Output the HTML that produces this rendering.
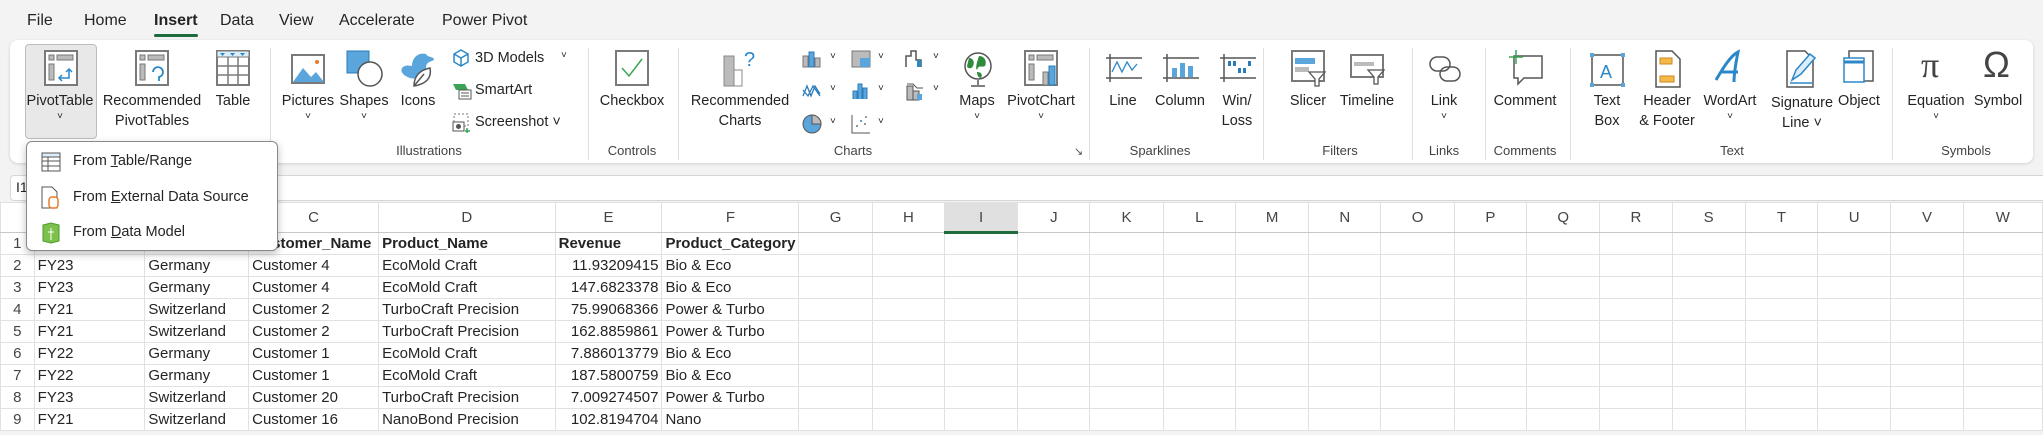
<!DOCTYPE html>
<html><head><meta charset="utf-8"><style>
*{margin:0;padding:0;box-sizing:border-box}
body{width:2043px;height:435px;overflow:hidden;background:#f3f3f3;font-family:"Liberation Sans",sans-serif;color:#242424;position:relative}
.a{position:absolute;white-space:nowrap}
.tab{position:absolute;top:12px;font-size:16px}
.rib{position:absolute;left:10px;top:40px;width:2023px;height:123px;background:#fff;border-radius:8px;box-shadow:0 1px 3px rgba(0,0,0,.15)}
.lb{position:absolute;font-size:14.5px;text-align:center;line-height:20px;transform:translateX(-50%);white-space:nowrap}
.gl{position:absolute;top:143px;font-size:13px;color:#424242;transform:translateX(-50%);white-space:nowrap}
.sep{position:absolute;top:48px;width:1px;height:112px;background:#e0e0e0}
.chev{font-size:10px;display:block;line-height:12px}
svg{position:absolute;overflow:visible}
table{position:absolute;left:0;top:202px;border-collapse:collapse;table-layout:fixed;font-size:15px;background:#fff}
td{border:1px solid #e1e1e1;height:22px;padding:0 3px;white-space:nowrap;overflow:hidden}
tr.h td{height:30px;text-align:center;color:#444;background:#fff;font-size:15px;border-bottom:1px solid #c8c8c8}
td.n{text-align:center;color:#444;background:#fff;padding:0}
td.r{text-align:right}
tr.b td{font-weight:bold}
.menu{position:absolute;left:26px;top:141px;width:252px;height:110px;background:#fff;border:1px solid #8a8a8a;border-radius:6px;box-shadow:0 3px 8px rgba(0,0,0,.25)}
.mi{position:absolute;left:46px;font-size:14.5px}
</style></head><body>
<div class="tab" style="left:27px">File</div>
<div class="tab" style="left:84px">Home</div>
<div class="tab" style="left:154px;font-weight:bold">Insert</div>
<div class="a" style="left:154px;top:34px;width:44px;height:3px;background:#1e6b3d;border-radius:2px"></div>
<div class="tab" style="left:220px">Data</div>
<div class="tab" style="left:279px">View</div>
<div class="tab" style="left:339px">Accelerate</div>
<div class="tab" style="left:442px">Power Pivot</div>

<div class="rib"></div>
<div class="a" style="left:25px;top:44px;width:72px;height:95px;background:#e8e8e8;border:1px solid #bdbdbd;border-radius:4px"></div>

<!-- PivotTable icon -->
<svg style="left:44px;top:50px" width="34" height="36"><rect x="1" y="1" width="32" height="34" fill="#fff" stroke="#7a7a7a" stroke-width="2"/><rect x="5" y="5" width="5" height="5" fill="#bbb" stroke="#777"/><rect x="13" y="5" width="16" height="5" fill="#bbb" stroke="#777"/><rect x="5" y="14" width="5" height="16" fill="#bbb" stroke="#777"/><path d="M15 28h10v-9M22 22l3-3 3 3M18 25l-3 3 3 3" fill="none" stroke="#2b88c8" stroke-width="1.5"/></svg>
<div class="lb" style="left:60px;top:91px">PivotTable<span class="chev">˅</span></div>
<svg style="left:135px;top:50px" width="34" height="36"><rect x="1" y="1" width="32" height="34" fill="#fff" stroke="#7a7a7a" stroke-width="2"/><rect x="5" y="5" width="5" height="5" fill="#bbb" stroke="#777"/><rect x="13" y="5" width="16" height="5" fill="#bbb" stroke="#777"/><rect x="5" y="14" width="5" height="16" fill="#bbb" stroke="#777"/><path d="M18 22a5 5 0 1 1 6 5v4M24 34v1" fill="none" stroke="#2b88c8" stroke-width="1.8"/></svg>
<div class="lb" style="left:152px;top:91px">Recommended<br>PivotTables</div>
<svg style="left:216px;top:50px" width="34" height="36"><rect x="1" y="1" width="32" height="34" fill="#fff" stroke="#7a7a7a" stroke-width="2"/><rect x="1" y="1" width="32" height="6" fill="#dbeefa" stroke="#7a7a7a"/><path d="M1 16h32M1 25h32M12 7v28M22 7v28" stroke="#7a7a7a" stroke-width="1.5"/><path d="M4 3h5l-2.5 3zM14 3h5l-2.5 3zM24 3h5l-2.5 3z" fill="#2b88c8"/></svg>
<div class="lb" style="left:233px;top:91px">Table</div>
<div class="sep" style="left:270px"></div>

<svg style="left:291px;top:54px" width="34" height="30"><rect x="1" y="1" width="32" height="28" fill="#fff" stroke="#7a7a7a" stroke-width="2"/><path d="M2 28l10-14 8 9 5-5 8 10z" fill="#5aa5dc"/><circle cx="26" cy="8" r="2" fill="#e87a2c"/></svg>
<div class="lb" style="left:308px;top:91px">Pictures<span class="chev">˅</span></div>
<svg style="left:346px;top:50px" width="38" height="38"><rect x="1" y="1" width="22" height="22" fill="#5aa5dc" stroke="#2b7cba"/><circle cx="24" cy="24" r="12" fill="#fff" stroke="#555" stroke-width="1.5"/></svg>
<div class="lb" style="left:364px;top:91px">Shapes<span class="chev">˅</span></div>
<svg style="left:400px;top:50px" width="38" height="38"><path d="M2 18c4-4 8-2 10-2 0-8 6-14 14-12 2 4 8 2 8 6-4 2-8 2-8 8 0 8-10 12-16 10C4 26 0 22 2 18z" fill="#5aa5dc"/><path d="M14 36c0-10 6-16 16-18 2 10-4 16-16 18zM14 36l10-12" fill="#fff" stroke="#555" stroke-width="1.5"/></svg>
<div class="lb" style="left:418px;top:91px">Icons</div>
<svg style="left:452px;top:49px" width="18" height="18"><path d="M9 1l7 4v8l-7 4-7-4V5zM2 5l7 4 7-4M9 9v8" fill="none" stroke="#2b88c8" stroke-width="1.5"/></svg>
<div class="a" style="left:475px;top:50px;font-size:14.5px">3D Models</div><div class="a" style="left:561px;top:50px;font-size:10px">˅</div>
<svg style="left:452px;top:82px" width="20" height="18"><path d="M1 2h12l3 6H4z" fill="#3aa356"/><rect x="7" y="8" width="12" height="9" fill="#fff" stroke="#555"/><path d="M9 11h8M9 14h8" stroke="#555"/></svg>
<div class="a" style="left:475px;top:82px;font-size:14.5px">SmartArt</div>
<svg style="left:452px;top:113px" width="20" height="20"><rect x="2" y="1" width="14" height="12" fill="none" stroke="#777" stroke-dasharray="2 2"/><rect x="1" y="9" width="11" height="9" fill="#fff" stroke="#555"/><circle cx="6.5" cy="13.5" r="2.5" fill="#555"/><path d="M15 15v5M13 18h5" stroke="#3aa356" stroke-width="1.5"/></svg>
<div class="a" style="left:475px;top:114px;font-size:14.5px">Screenshot ˅</div>
<div class="gl" style="left:429px">Illustrations</div>
<div class="sep" style="left:588px"></div>

<svg style="left:615px;top:50px" width="34" height="36"><rect x="1" y="1" width="32" height="34" fill="#fff" stroke="#7a7a7a" stroke-width="2"/><path d="M7 18l7 8 13-17" fill="none" stroke="#3aa356" stroke-width="1.5"/></svg>
<div class="lb" style="left:632px;top:91px">Checkbox</div>
<div class="gl" style="left:632px">Controls</div>
<div class="sep" style="left:678px"></div>

<svg style="left:723px;top:50px" width="36" height="38"><rect x="1" y="6" width="10" height="30" fill="#bbb" stroke="#888"/><rect x="11" y="20" width="8" height="16" fill="#fff" stroke="#888"/><text x="21" y="16" font-size="20" fill="#2b88c8" font-family="Liberation Sans">?</text></svg>
<div class="lb" style="left:740px;top:91px">Recommended<br>Charts</div>
<!-- small chart icons -->
<svg style="left:802px;top:50px" width="20" height="18"><rect x="1" y="6" width="5" height="11" fill="#bbb" stroke="#777"/><rect x="7" y="2" width="5" height="15" fill="#5aa5dc" stroke="#2b7cba"/><rect x="13" y="8" width="5" height="9" fill="#bbb" stroke="#777"/></svg><div class="a" style="left:830px;top:51px;font-size:10px">˅</div>
<svg style="left:802px;top:82px" width="20" height="18"><path d="M1 14l4-10 4 10 4-10 5 8M1 8l5 6 5-10 7 10" fill="none" stroke="#2b7cba" stroke-width="1.3"/></svg><div class="a" style="left:830px;top:83px;font-size:10px">˅</div>
<svg style="left:802px;top:114px" width="20" height="20"><circle cx="10" cy="10" r="9" fill="#5aa5dc" stroke="#555"/><path d="M10 10V1A9 9 0 0 1 19 10z" fill="#bbb" stroke="#555"/></svg><div class="a" style="left:830px;top:116px;font-size:10px">˅</div>
<svg style="left:851px;top:50px" width="20" height="18"><rect x="1" y="1" width="18" height="16" fill="#bbb" stroke="#777"/><rect x="9" y="8" width="10" height="9" fill="#5aa5dc"/></svg><div class="a" style="left:878px;top:51px;font-size:10px">˅</div>
<svg style="left:851px;top:82px" width="20" height="18"><path d="M2 17V9h4v8M7 17V2h4v15M12 17V6h4v11" fill="#5aa5dc" stroke="#2b7cba"/></svg><div class="a" style="left:878px;top:83px;font-size:10px">˅</div>
<svg style="left:851px;top:114px" width="20" height="20"><path d="M1 1v18h18" fill="none" stroke="#555"/><circle cx="6" cy="12" r="1" fill="#777"/><circle cx="10" cy="7" r="1" fill="#2b88c8"/><circle cx="14" cy="10" r="1" fill="#777"/><circle cx="15" cy="3" r="1" fill="#777"/></svg><div class="a" style="left:878px;top:116px;font-size:10px">˅</div>
<svg style="left:905px;top:50px" width="20" height="18"><path d="M1 17V6h5V1h5v9h5v7" fill="none" stroke="#555" stroke-width="1.5"/><rect x="12" y="10" width="4" height="7" fill="#2b88c8"/></svg><div class="a" style="left:933px;top:51px;font-size:10px">˅</div>
<svg style="left:905px;top:82px" width="20" height="20"><rect x="2" y="4" width="6" height="14" fill="#bbb" stroke="#555"/><rect x="8" y="9" width="6" height="9" fill="#bbb" stroke="#555"/><rect x="12" y="12" width="5" height="6" fill="#5aa5dc"/><path d="M2 2h6l4 4h6" fill="none" stroke="#555"/></svg><div class="a" style="left:933px;top:83px;font-size:10px">˅</div>
<svg style="left:961px;top:50px" width="34" height="38"><circle cx="17" cy="16" r="13" fill="#fff" stroke="#555" stroke-width="1.5"/><path d="M8 8c4 0 6 4 4 8s-6 2-6 0zM18 6c6 0 8 6 6 10-4 2-6-2-8 4-2-2 0-8 2-14zM16 22c4 0 6 2 4 6-2 0-4-2-4-6z" fill="#2f8a3d"/><path d="M17 30v5M10 36h14" stroke="#555" stroke-width="1.5"/></svg>
<div class="lb" style="left:977px;top:91px">Maps<span class="chev">˅</span></div>
<svg style="left:1024px;top:50px" width="36" height="38"><rect x="1" y="1" width="32" height="34" fill="#fff" stroke="#7a7a7a" stroke-width="2"/><rect x="5" y="5" width="5" height="5" fill="#bbb" stroke="#777"/><rect x="13" y="5" width="16" height="5" fill="#bbb" stroke="#777"/><rect x="5" y="14" width="5" height="16" fill="#bbb" stroke="#777"/><rect x="19" y="22" width="5" height="13" fill="#bbb" stroke="#777"/><rect x="25" y="16" width="6" height="19" fill="#5aa5dc" stroke="#2b7cba"/></svg>
<div class="lb" style="left:1041px;top:91px">PivotChart<span class="chev">˅</span></div>
<div class="gl" style="left:853px">Charts</div>
<div class="a" style="left:1074px;top:145px;font-size:11px;color:#555">↘</div>
<div class="sep" style="left:1089px"></div>

<svg style="left:1106px;top:54px" width="36" height="28"><path d="M0 4h36M0 24h36M4 0v28" stroke="#555" stroke-width="1.5"/><path d="M6 18l5-10 5 10 5-10 5 8 5-6" fill="none" stroke="#2b88c8" stroke-width="1.3"/></svg>
<div class="lb" style="left:1123px;top:91px">Line</div>
<svg style="left:1163px;top:54px" width="36" height="28"><path d="M0 4h36M0 24h36M4 0v28" stroke="#555" stroke-width="1.5"/><rect x="9" y="14" width="5" height="9" fill="#5aa5dc"/><rect x="17" y="9" width="5" height="14" fill="#5aa5dc"/><rect x="25" y="12" width="5" height="11" fill="#5aa5dc"/></svg>
<div class="lb" style="left:1180px;top:91px">Column</div>
<svg style="left:1220px;top:54px" width="36" height="28"><path d="M0 4h36M4 0v28M0 24h36" stroke="#555" stroke-width="1.5"/><rect x="8" y="7" width="3" height="5" fill="#2b7cba"/><rect x="13" y="7" width="3" height="5" fill="#2b7cba"/><rect x="18" y="14" width="3" height="5" fill="#2b7cba"/><rect x="23" y="14" width="3" height="5" fill="#2b7cba"/><rect x="28" y="7" width="3" height="5" fill="#2b7cba"/></svg>
<div class="lb" style="left:1237px;top:91px">Win/<br>Loss</div>
<div class="gl" style="left:1160px">Sparklines</div>
<div class="sep" style="left:1263px"></div>

<svg style="left:1291px;top:50px" width="36" height="38"><rect x="1" y="1" width="32" height="30" fill="#fff" stroke="#7a7a7a" stroke-width="2"/><rect x="4" y="8" width="20" height="6" fill="#5aa5dc"/><rect x="4" y="17" width="14" height="5" fill="#bbb"/><path d="M18 22h16l-6 7v7h-4v-7z" fill="#fff" stroke="#555" stroke-width="1.3"/></svg>
<div class="lb" style="left:1308px;top:91px">Slicer</div>
<svg style="left:1350px;top:54px" width="36" height="34"><rect x="1" y="1" width="32" height="22" fill="#fff" stroke="#7a7a7a" stroke-width="2"/><path d="M4 10h20" stroke="#bbb" stroke-width="4"/><path d="M18 16h16l-6 7v7h-4v-7z" fill="#fff" stroke="#555" stroke-width="1.3"/></svg>
<div class="lb" style="left:1367px;top:91px">Timeline</div>
<div class="gl" style="left:1340px">Filters</div>
<div class="sep" style="left:1412px"></div>

<svg style="left:1428px;top:54px" width="34" height="30"><rect x="2" y="3" width="20" height="14" rx="7" fill="none" stroke="#555" stroke-width="1.5"/><rect x="12" y="13" width="20" height="14" rx="7" fill="none" stroke="#555" stroke-width="1.5"/></svg>
<div class="lb" style="left:1444px;top:91px">Link<span class="chev">˅</span></div>
<div class="gl" style="left:1444px">Links</div>
<div class="sep" style="left:1485px"></div>

<svg style="left:1508px;top:50px" width="36" height="38"><path d="M6 6h28v22H16l-6 6v-6H6z" fill="#fff" stroke="#555" stroke-width="1.5"/><path d="M8 0v14M1 7h14" stroke="#3aa356" stroke-width="1.5"/></svg>
<div class="lb" style="left:1525px;top:91px">Comment</div>
<div class="gl" style="left:1525px">Comments</div>
<div class="sep" style="left:1570px"></div>

<svg style="left:1590px;top:53px" width="36" height="36"><rect x="2" y="2" width="31" height="30" fill="#fff" stroke="#555" stroke-width="1.5"/><g fill="#5aa5dc"><rect x="0" y="0" width="4" height="4"/><rect x="31" y="0" width="4" height="4"/><rect x="0" y="30" width="4" height="4"/><rect x="31" y="30" width="4" height="4"/></g><text x="10" y="25" font-size="18" fill="#2b88c8" font-family="Liberation Sans">A</text></svg>
<div class="lb" style="left:1607px;top:91px">Text<br>Box</div>
<svg style="left:1655px;top:50px" width="26" height="38"><path d="M1 1h16l8 8v28H1z" fill="#fff" stroke="#555" stroke-width="1.5"/><rect x="5" y="8" width="12" height="6" fill="#f5b94a" stroke="#c98a1c"/><rect x="5" y="26" width="14" height="6" fill="#f5b94a" stroke="#c98a1c"/></svg>
<div class="lb" style="left:1667px;top:91px">Header<br>&amp; Footer</div>
<svg style="left:1714px;top:50px" width="32" height="38"><path d="M2 30c6-10 14-24 22-28-2 10-4 20-4 30M8 22h16" fill="none" stroke="#2b88c8" stroke-width="3"/></svg>
<div class="lb" style="left:1730px;top:91px">WordArt<span class="chev">˅</span></div>
<svg style="left:1786px;top:50px" width="34" height="38"><path d="M1 1h18l8 8v28H1z" fill="#fff" stroke="#555" stroke-width="1.5"/><path d="M6 30l4-10L24 4l5 4-14 16z" fill="#dbeefa" stroke="#2b88c8" stroke-width="1.5"/><path d="M4 33h22" stroke="#2b88c8" stroke-width="1.5"/></svg>
<div class="lb" style="left:1802px;top:93px">Signature<br>Line ˅</div>
<svg style="left:1843px;top:50px" width="32" height="38"><rect x="6" y="1" width="24" height="30" fill="#fff" stroke="#555" stroke-width="1.5"/><rect x="1" y="8" width="20" height="24" fill="#fff" stroke="#2b88c8" stroke-width="1.5"/><path d="M1 12h20" stroke="#2b88c8" stroke-width="3"/></svg>
<div class="lb" style="left:1859px;top:91px">Object</div>
<div class="gl" style="left:1732px">Text</div>
<div class="sep" style="left:1892px"></div>

<div class="a" style="left:1921px;top:44px;font-size:36px;font-family:'Liberation Serif',serif;color:#444">π</div>
<div class="lb" style="left:1936px;top:91px">Equation<span class="chev">˅</span></div>
<div class="a" style="left:1983px;top:44px;font-size:36px;color:#444">Ω</div>
<div class="lb" style="left:1998px;top:91px">Symbol</div>
<div class="gl" style="left:1966px">Symbols</div>

<!-- formula bar -->
<div class="a" style="left:10px;top:175px;width:2040px;height:26px;background:#fff;border:1px solid #d6d6d6;border-radius:4px"></div>
<div class="a" style="left:16px;top:179px;font-size:14px">I1</div>

<table>
<colgroup><col style="width:34px"><col style="width:111px"><col style="width:104px"><col style="width:130px"><col style="width:177px"><col style="width:107px"><col style="width:136px"><col style="width:74px"><col style="width:73px"><col style="width:74px"><col style="width:73px"><col style="width:74px"><col style="width:73px"><col style="width:74px"><col style="width:73px"><col style="width:74px"><col style="width:73px"><col style="width:74px"><col style="width:73px"><col style="width:74px"><col style="width:73px"><col style="width:74px"><col style="width:73px"><col style="width:80px"></colgroup>
<tr class="h"><td></td><td>A</td><td>B</td><td>C</td><td>D</td><td>E</td><td>F</td><td>G</td><td>H</td><td style="background:#e0e0e0;border-bottom:3px solid #1e6b3d">I</td><td>J</td><td>K</td><td>L</td><td>M</td><td>N</td><td>O</td><td>P</td><td>Q</td><td>R</td><td>S</td><td>T</td><td>U</td><td>V</td><td>W</td></tr>
<tr class="b"><td class="n" style="font-weight:normal">1</td><td>Fiscal_Year</td><td>Country</td><td>Customer_Name</td><td>Product_Name</td><td>Revenue</td><td>Product_Category</td><td></td><td></td><td></td><td></td><td></td><td></td><td></td><td></td><td></td><td></td><td></td><td></td><td></td><td></td><td></td><td></td><td></td></tr>
<tr><td class="n">2</td><td>FY23</td><td>Germany</td><td>Customer 4</td><td>EcoMold Craft</td><td class="r">11.93209415</td><td>Bio &amp; Eco</td><td></td><td></td><td></td><td></td><td></td><td></td><td></td><td></td><td></td><td></td><td></td><td></td><td></td><td></td><td></td><td></td><td></td></tr>
<tr><td class="n">3</td><td>FY23</td><td>Germany</td><td>Customer 4</td><td>EcoMold Craft</td><td class="r">147.6823378</td><td>Bio &amp; Eco</td><td></td><td></td><td></td><td></td><td></td><td></td><td></td><td></td><td></td><td></td><td></td><td></td><td></td><td></td><td></td><td></td><td></td></tr>
<tr><td class="n">4</td><td>FY21</td><td>Switzerland</td><td>Customer 2</td><td>TurboCraft Precision</td><td class="r">75.99068366</td><td>Power &amp; Turbo</td><td></td><td></td><td></td><td></td><td></td><td></td><td></td><td></td><td></td><td></td><td></td><td></td><td></td><td></td><td></td><td></td><td></td></tr>
<tr><td class="n">5</td><td>FY21</td><td>Switzerland</td><td>Customer 2</td><td>TurboCraft Precision</td><td class="r">162.8859861</td><td>Power &amp; Turbo</td><td></td><td></td><td></td><td></td><td></td><td></td><td></td><td></td><td></td><td></td><td></td><td></td><td></td><td></td><td></td><td></td><td></td></tr>
<tr><td class="n">6</td><td>FY22</td><td>Germany</td><td>Customer 1</td><td>EcoMold Craft</td><td class="r">7.886013779</td><td>Bio &amp; Eco</td><td></td><td></td><td></td><td></td><td></td><td></td><td></td><td></td><td></td><td></td><td></td><td></td><td></td><td></td><td></td><td></td><td></td></tr>
<tr><td class="n">7</td><td>FY22</td><td>Germany</td><td>Customer 1</td><td>EcoMold Craft</td><td class="r">187.5800759</td><td>Bio &amp; Eco</td><td></td><td></td><td></td><td></td><td></td><td></td><td></td><td></td><td></td><td></td><td></td><td></td><td></td><td></td><td></td><td></td><td></td></tr>
<tr><td class="n">8</td><td>FY23</td><td>Switzerland</td><td>Customer 20</td><td>TurboCraft Precision</td><td class="r">7.009274507</td><td>Power &amp; Turbo</td><td></td><td></td><td></td><td></td><td></td><td></td><td></td><td></td><td></td><td></td><td></td><td></td><td></td><td></td><td></td><td></td><td></td></tr>
<tr><td class="n">9</td><td>FY21</td><td>Switzerland</td><td>Customer 16</td><td>NanoBond Precision</td><td class="r">102.8194704</td><td>Nano</td><td></td><td></td><td></td><td></td><td></td><td></td><td></td><td></td><td></td><td></td><td></td><td></td><td></td><td></td><td></td><td></td><td></td></tr>
</table>

<div class="menu">
<svg style="left:14px;top:10px" width="20" height="20"><rect x="1" y="1" width="18" height="18" fill="#fff" stroke="#555"/><rect x="1" y="1" width="18" height="4" fill="#dbeefa" stroke="#555"/><path d="M1 9h18M1 14h18M7 5v14" stroke="#555"/></svg>
<div class="mi" style="top:11px">From <u>T</u>able/Range</div>
<svg style="left:14px;top:44px" width="20" height="24"><path d="M1 1h10l5 5v16H1z" fill="#fff" stroke="#555"/><rect x="8" y="11" width="9" height="11" rx="3" fill="#fff" stroke="#e87a2c" stroke-width="1.5"/></svg>
<div class="mi" style="top:47px">From <u>E</u>xternal Data Source</div>
<svg style="left:14px;top:80px" width="20" height="22"><path d="M2 3l8-2 8 2v16l-8 2-8-2z" fill="#7cc14b" stroke="#4e9a2a"/><path d="M10 6v12M7 10h6" stroke="#fff"/></svg>
<div class="mi" style="top:82px">From <u>D</u>ata Model</div>
</div>
</body></html>
